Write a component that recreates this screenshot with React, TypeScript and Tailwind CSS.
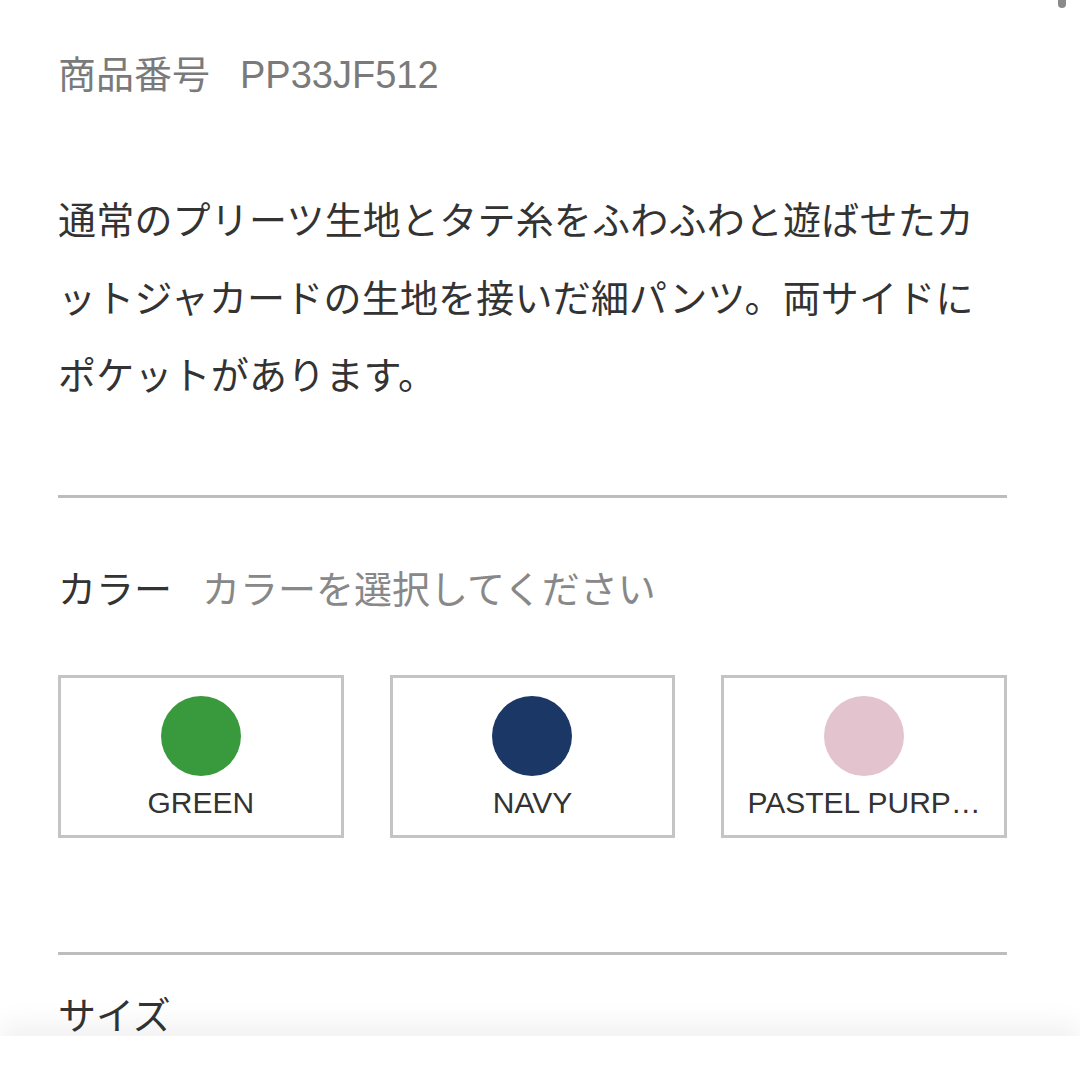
import React from "react";

const jp = { fontFamily: '"Liberation Sans", "Noto Sans CJK JP", sans-serif' };

function Swatch({ color, label }: { color: string; label: string }) {
  return (
    <div className="h-[163px] border-[3px] border-[#c4c4c4] bg-white flex flex-col items-center pt-[18px]">
      <div className="w-[80px] h-[80px] rounded-full" style={{ backgroundColor: color }} />
      <div className="mt-[11px] h-[32px] w-full px-[14px] text-center text-[30px] leading-[32px] text-[#333] whitespace-nowrap overflow-hidden">
        {label}
      </div>
    </div>
  );
}

export default function App() {
  return (
    <div className="relative w-[1080px] h-[1080px] overflow-hidden bg-white" style={jp}>
      <div className="absolute right-[14px] top-[-8px] w-[8px] h-[16px] rounded-full bg-[#8a8a8a]" />
      <div className="ml-[58px] w-[949px]">
        <div className="pt-[48px] h-[103px] text-[38px] leading-[55px] text-[#7a7a7a]">
          商品番号<span className="ml-[30px]">PP33JF512</span>
        </div>
        <p className="mt-[80px] text-[38px] leading-[77.5px] text-[#333] tracking-[0.2px]">
          通常のプリーツ生地とタテ糸をふわふわと遊ばせたカ<br />
          ットジャカードの生地を接いだ細パンツ。両サイドに<br />
          ポケットがあります。
        </p>
        <div className="mt-[79px] h-[3px] bg-[#bdbdbd]" />
        <div className="mt-[65px] h-[55px] text-[38px] leading-[55px] flex">
          <span className="text-[#333]">カラー</span>
          <span className="ml-[30px] text-[#888]">カラーを選択してください</span>
        </div>
        <div className="mt-[57px] grid grid-cols-3 gap-[46px]">
          <Swatch color="#389a3d" label="GREEN" />
          <Swatch color="#1b3765" label="NAVY" />
          <Swatch color="#e3c3ce" label="PASTEL PURP…" />
        </div>
        <div className="mt-[114px] h-[3px] bg-[#bdbdbd]" />
        <div className="mt-[34px] h-[55px] text-[38px] leading-[55px] text-[#333]">サイズ</div>
      </div>
      <div className="absolute left-0 right-0 bottom-0 h-[44px] bg-white shadow-[0_-12px_28px_rgba(0,0,0,0.06)]" />
    </div>
  );
}
